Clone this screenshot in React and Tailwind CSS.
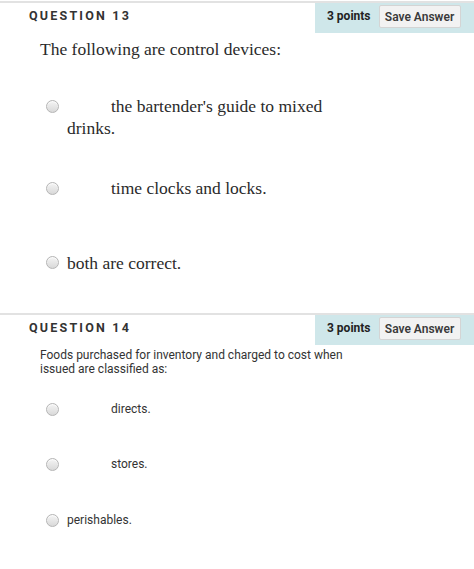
import React from "react";

const Radio = () => (
  <span className="mt-[1px] inline-block h-[13px] w-[13px] shrink-0 rounded-full border border-[#b5b5b5] bg-[linear-gradient(#f4f4f4,#d9d9d9)] shadow-[inset_0_1px_1px_rgba(255,255,255,0.8)]" />
);

const Header = ({ n }) => (
  <div className="flex h-[30px] items-start justify-between border-t-2 border-[#e2e2e2]">
    <div className="pl-[29px] pt-[4px] text-[12.5px] font-bold tracking-[2.2px] text-[#333] [font-family:Roboto,'Liberation_Sans',sans-serif]">
      QUESTION {n}
    </div>
    <div className="flex h-[30px] w-[159px] items-start bg-[#cfe7ea] pl-[12px] pt-[2px]">
      <span className="mt-[2px] text-[12px] font-bold text-[#222] [font-family:Roboto,'Liberation_Sans',sans-serif]">3 points</span>
      <span className="ml-[8px] flex h-[23px] w-[82px] items-center justify-center rounded-[2px] border border-[#d4d4d4] bg-[#f2f2f2] text-[12px] font-semibold text-[#3a3a3a] [font-family:Roboto,'Liberation_Sans',sans-serif]">
        Save Answer
      </span>
    </div>
  </div>
);

const serif = "[font-family:'Liberation_Serif','DejaVu_Serif',serif]";
const sans = "[font-family:Roboto,'Liberation_Sans',sans-serif]";

export default function App() {
  return (
    <div className="h-[569px] w-[474px] overflow-hidden bg-white">
      <div className="h-[1px]" />
      <Header n={13} />
      <div className={`mt-[7px] pl-[40px] text-[17.5px] leading-[22px] text-[#2a2a2a] ${serif}`}>
        The following are control devices:
      </div>

      <div className={`mt-[35px] flex text-[17.5px] leading-[22px] text-[#2a2a2a] ${serif}`}>
        <div className="w-[67px] pl-[46px] pt-[1px]"><Radio /></div>
        <div className="indent-[44px]">the bartender's guide to mixed<br />drinks.</div>
      </div>

      <div className={`mt-[38px] flex text-[17.5px] leading-[22px] text-[#2a2a2a] ${serif}`}>
        <div className="w-[67px] pl-[46px] pt-[1px]"><Radio /></div>
        <div className="indent-[44px]">time clocks and locks.</div>
      </div>

      <div className={`mt-[52px] flex text-[17.5px] leading-[22px] text-[#2a2a2a] ${serif}`}>
        <div className="w-[67px] pl-[46px] pt-[0px]"><Radio /></div>
        <div>both are correct.</div>
      </div>

      <div className="h-[39px]" />
      <Header n={14} />
      <div className={`mt-[5px] w-[360px] pl-[40px] text-[12px] leading-[14px] text-[#333] ${sans}`}>
        Foods purchased for inventory and charged to cost when issued are classified as:
      </div>

      <div className={`mt-[25px] flex text-[12px] leading-[16px] text-[#333] ${sans}`}>
        <div className="w-[67px] pl-[46px] pt-[1px]"><Radio /></div>
        <div className="indent-[44px]">directs.</div>
      </div>
      <div className={`mt-[36px] flex text-[12px] leading-[16px] text-[#333] ${sans}`}>
        <div className="w-[67px] pl-[46px] pt-[1px]"><Radio /></div>
        <div className="indent-[44px]">stores.</div>
      </div>
      <div className={`mt-[37px] flex text-[12px] leading-[16px] text-[#333] ${sans}`}>
        <div className="w-[67px] pl-[46px] pt-[1px]"><Radio /></div>
        <div>perishables.</div>
      </div>
    </div>
  );
}
